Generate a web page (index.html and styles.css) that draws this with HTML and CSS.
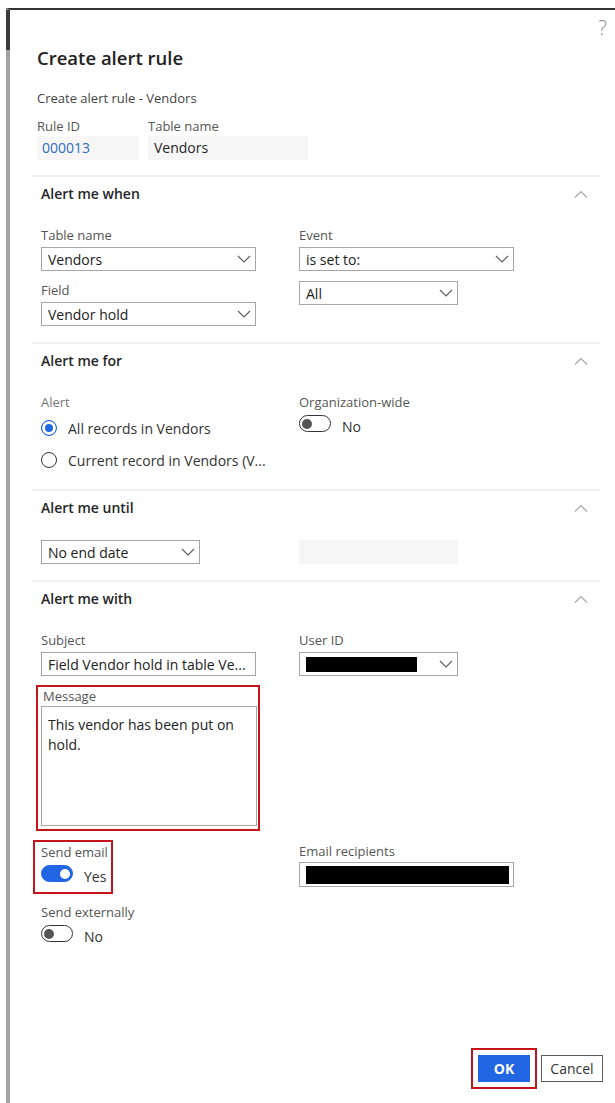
FILE: index.html
```html
<!DOCTYPE html>
<html lang="en">

<head>
    <meta charset="UTF-8">
    <meta name="viewport" content="width=device-width, initial-scale=1.0">
    <title>Create alert rule</title>
    <link rel="stylesheet" href="styles.css">
</head>

<body>
    <div class="panel">
        <span class="help">?</span>

        <div class="head">
            <h1>Create alert rule</h1>
            <p class="sub">Create alert rule - Vendors</p>
            <div class="ids">
                <div class="field">
                    <label>Rule ID</label>
                    <div class="ro link w-rule">000013</div>
                </div>
                <div class="field">
                    <label>Table name</label>
                    <div class="ro w-table">Vendors</div>
                </div>
            </div>
        </div>

        <!-- alert me when -->
        <section class="group">
            <div class="group-head">
                <h2>Alert me when</h2>
                <svg class="chev-up" width="14" height="8" viewBox="0 0 14 8"><path d="M1 7.5L7 1.5l6 6" /></svg>
            </div>
            <div class="grid">
                <div class="field">
                    <label>Table name</label>
                    <div class="select w-lg">Vendors<svg width="14" height="8" viewBox="0 0 14 8"><path d="M1 1l6 6 6-6" /></svg></div>
                </div>
                <div class="field">
                    <label>Event</label>
                    <div class="select w-lg">is set to:<svg width="14" height="8" viewBox="0 0 14 8"><path d="M1 1l6 6 6-6" /></svg></div>
                </div>
                <div class="field">
                    <label>Field</label>
                    <div class="select w-lg">Vendor hold<svg width="14" height="8" viewBox="0 0 14 8"><path d="M1 1l6 6 6-6" /></svg></div>
                </div>
                <div class="field">
                    <div class="select w-sm">All<svg width="14" height="8" viewBox="0 0 14 8"><path d="M1 1l6 6 6-6" /></svg></div>
                </div>
            </div>
        </section>

        <!-- alert me for -->
        <section class="group tight">
            <div class="group-head">
                <h2>Alert me for</h2>
                <svg class="chev-up" width="14" height="8" viewBox="0 0 14 8"><path d="M1 7.5L7 1.5l6 6" /></svg>
            </div>
            <div class="grid">
                <div class="field">
                    <label class="light">Alert</label>
                    <div class="radio-row"><span class="radio on"></span>All records in Vendors</div>
                    <div class="radio-row"><span class="radio"></span>Current record in Vendors (V...</div>
                </div>
                <div class="field switch">
                    <label>Organization-wide</label>
                    <div class="switch-row"><span class="toggle"><i></i></span><span>No</span></div>
                </div>
            </div>
        </section>

        <!-- alert me until -->
        <section class="group">
            <div class="group-head">
                <h2>Alert me until</h2>
                <svg class="chev-up" width="14" height="8" viewBox="0 0 14 8"><path d="M1 7.5L7 1.5l6 6" /></svg>
            </div>
            <div class="grid">
                <div class="select w-sm">No end date<svg width="14" height="8" viewBox="0 0 14 8"><path d="M1 1l6 6 6-6" /></svg></div>
                <div class="ro w-sm"></div>
            </div>
        </section>

        <!-- alert me with -->
        <section class="group last">
            <div class="group-head">
                <h2>Alert me with</h2>
                <svg class="chev-up" width="14" height="8" viewBox="0 0 14 8"><path d="M1 7.5L7 1.5l6 6" /></svg>
            </div>
            <div class="grid with">
                <div class="field">
                    <label>Subject</label>
                    <div class="input w-lg">Field Vendor hold in table Ve...</div>
                </div>
                <div class="field">
                    <label>User ID</label>
                    <div class="select w-sm"><span class="redact r-user"></span><svg width="14" height="8" viewBox="0 0 14 8"><path d="M1 1l6 6 6-6" /></svg></div>
                </div>
                <div class="field mark mark-msg">
                    <label>Message</label>
                    <div class="textarea">This vendor has been put on hold.</div>
                </div>
                <div></div>
                <div class="field switch mark mark-mail">
                    <label>Send email</label>
                    <div class="switch-row"><span class="toggle on"><i></i></span><span>Yes</span></div>
                </div>
                <div class="field pad-top">
                    <label>Email recipients</label>
                    <div class="input w-lg tall"><span class="redact r-mail"></span></div>
                </div>
                <div class="field switch">
                    <label>Send externally</label>
                    <div class="switch-row"><span class="toggle"><i></i></span><span>No</span></div>
                </div>
            </div>
        </section>

        <div class="actions">
            <button class="ok">OK</button>
            <button class="cancel">Cancel</button>
        </div>
    </div>
</body>

</html>
```

FILE: styles.css
```css
* {
    margin: 0;
    padding: 0;
    box-sizing: border-box;
}

body {
    font-family: "Open Sans", "Noto Sans", sans-serif;
    font-size: 14px;
    color: #262626;
    background: #fff;
}

.panel {
    position: relative;
    height: 1095px;
    margin: 8px 0 0 6px;
    padding: 0 15px 0 22px;
    border-top: 2px solid #333;
    border-left: 4px solid #a3a3a3;
    display: flex;
    flex-direction: column;
}

/* darker top part of the left edge */
.panel::before {
    content: "";
    position: absolute;
    left: -4px;
    top: 0;
    width: 4px;
    height: 40px;
    background: #3c3c3c;
}

.help {
    position: absolute;
    top: 7px;
    right: 8px;
    font-size: 20px;
    line-height: 22px;
    font-weight: 300;
    color: #8a8a8a;
}

.head {
    padding: 0 0 15px 5px;
}

.head h1 {
    margin-top: 34px;
    font-size: 18.5px;
    line-height: 28px;
    font-weight: 600;
    color: #222;
}

.head .sub {
    margin-top: 17px;
    font-size: 13px;
    line-height: 18px;
    color: #444;
}

.ids {
    display: flex;
    gap: 9px;
    margin-top: 10px;
}

.ids label {
    margin-bottom: 1px;
}

label {
    display: block;
    font-size: 13px;
    line-height: 18px;
    color: #555;
    margin-bottom: 3px;
}

label.light {
    color: #777;
    margin-bottom: 1px;
}

.switch label {
    margin-bottom: 0;
}

.ro {
    height: 24px;
    line-height: 24px;
    padding: 0 6px;
    background: #f6f6f6;
}

.link {
    color: #2f6cc0;
    padding-left: 5px;
}

.w-rule {
    width: 102px;
}

.w-table {
    width: 160px;
}

.w-lg {
    width: 215px;
}

.w-sm {
    width: 159px;
}

/* sections */
.group {
    border-top: 2px solid #f0f0f0;
    padding: 0 0 16px 9px;
}

.group.tight {
    padding-bottom: 13px;
}

.group-head {
    height: 27px;
    padding: 7px 12px 0 0;
    display: flex;
    justify-content: space-between;
    align-items: center;
}

.group-head h2 {
    font-size: 14px;
    line-height: 20px;
    font-weight: 600;
    color: #262626;
}

.chev-up path {
    fill: none;
    stroke: #a8a8a8;
    stroke-width: 1.2;
}

.grid {
    display: grid;
    grid-template-columns: 258px 1fr;
    row-gap: 10px;
    align-items: start;
    padding-top: 22px;
}

.grid.with {
    row-gap: 9px;
}

/* inputs */
.select,
.input {
    height: 24px;
    padding: 0 4px 0 6px;
    border: 1px solid #a6a6a6;
    display: flex;
    align-items: center;
    justify-content: space-between;
    white-space: nowrap;
    overflow: hidden;
    color: #222;
}

.input.tall {
    height: 25px;
}

.select svg path {
    fill: none;
    stroke: #606060;
    stroke-width: 1.2;
}

.textarea {
    width: 216px;
    height: 120px;
    margin-left: -2px;
    margin-top: -2px;
    padding: 8px 14px 0 6px;
    border: 1px solid #a6a6a6;
    line-height: 20px;
    color: #222;
}

.redact {
    display: block;
    background: #000;
}

.r-user {
    width: 111px;
    height: 15px;
}

.r-mail {
    width: 206px;
    height: 18px;
}

/* radios and toggles */
.radio-row {
    height: 32px;
    display: flex;
    align-items: center;
    gap: 11px;
    color: #333;
}

.radio {
    width: 16px;
    height: 16px;
    border-radius: 50%;
    border: 1px solid #333;
}

.radio.on {
    border-color: #2266e3;
    background: #2266e3;
    box-shadow: inset 0 0 0 3px #fff;
}

.switch-row {
    display: flex;
    align-items: flex-start;
    gap: 11px;
    height: 25px;
    color: #333;
}

.switch-row span:last-child {
    margin-top: 7px;
    line-height: 18px;
}

.toggle {
    margin-top: 4px;
    width: 32px;
    height: 17px;
    border-radius: 9px;
    border: 1.5px solid #333;
    padding: 0 2px;
    display: flex;
    align-items: center;
}

.toggle i {
    width: 10px;
    height: 10px;
    border-radius: 50%;
    background: #555;
}

.toggle.on {
    background: #2266e3;
    border-color: #2266e3;
    justify-content: flex-end;
}

.toggle.on i {
    background: #fff;
}

/* red annotation frames */
.mark {
    border: 2px solid #c5141b;
}

.mark-msg {
    width: 224px;
    margin-left: -5px;
    padding: 0 2px 3px 5px;
}

.mark-mail {
    width: 80px;
    margin-left: -8px;
    padding: 1px 0 6px 6px;
}

.pad-top {
    padding-top: 2px;
}

.pad-top label {
    margin-bottom: 2px;
}

/* footer */
.actions {
    margin-top: auto;
    margin-right: -3px;
    padding-bottom: 21px;
    display: flex;
    justify-content: flex-end;
    gap: 11px;
}

.actions button {
    font-family: inherit;
    font-size: 14px;
    height: 27px;
    cursor: pointer;
}

.ok {
    width: 52px;
    border: none;
    background: #2266e3;
    color: #fff;
    font-weight: 700;
    outline: 2px solid #c5141b;
    outline-offset: 5px;
}

.cancel {
    width: 62px;
    border: 1px solid #5c5c5c;
    background: #fff;
    color: #333;
}
```
